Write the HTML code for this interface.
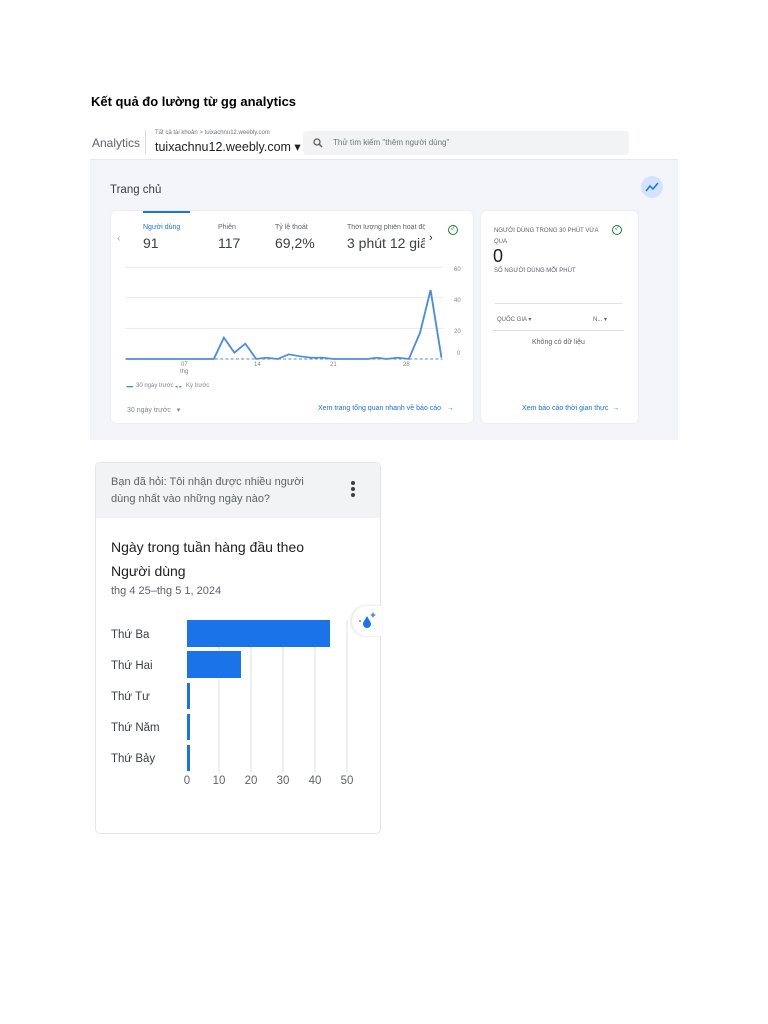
<!DOCTYPE html>
<html><head><meta charset="utf-8"><style>
*{margin:0;padding:0;box-sizing:border-box}
body{width:768px;height:1024px;background:#fff;position:relative;font-family:"Liberation Sans","Noto Sans CJK SC",sans-serif;overflow:hidden}
.a{position:absolute;white-space:nowrap}
.t{position:absolute;white-space:nowrap;font-size:6px;color:#80868b}
</style></head><body>
<div class="a" style="left:91px;top:94px;font-size:13px;font-weight:bold;color:#000">Kết quả đo lường từ gg analytics</div>

<div class="a" style="left:90px;top:124px;width:588px;height:316px;background:#f3f5f8"></div>
<div class="a" style="left:90px;top:124px;width:588px;height:36px;background:#fff;border-bottom:1px solid #e6e8eb"></div>
<div class="a" style="left:92px;top:136px;font-size:12px;color:#5f6368">Analytics</div>
<div class="a" style="left:145px;top:130px;width:1px;height:24px;background:#dadce0"></div>
<div class="a" style="left:155px;top:130px;font-size:6px;color:#70757a">Tất cả tài khoản &gt; tuixachnu12.weebly.com</div>
<div class="a" style="left:155px;top:139px;font-size:12.5px;color:#202124">tuixachnu12.weebly.com ▾</div>
<div class="a" style="left:303px;top:131px;width:326px;height:24px;background:#f1f3f4;border-radius:4px"></div>
<svg class="a" style="left:313px;top:138px" width="10" height="10"><circle cx="4" cy="4" r="3" fill="none" stroke="#5f6368" stroke-width="1.3"/><line x1="6.2" y1="6.2" x2="9" y2="9" stroke="#5f6368" stroke-width="1.5"/></svg>
<div class="a" style="left:333px;top:138px;font-size:8px;color:#70757a">Thử tìm kiếm "thêm người dùng"</div>
<div class="a" style="left:110px;top:184px;font-size:11.5px;color:#3c4043">Trang chủ</div>
<div class="a" style="left:641px;top:176px;width:22px;height:22px;border-radius:11px;background:#d3e3fd"></div>
<svg class="a" style="left:645px;top:181px" width="14" height="12"><polyline points="1,10 5,5 8,8 13,2" fill="none" stroke="#1a73e8" stroke-width="1.5"/></svg>

<div class="a" style="left:111px;top:211px;width:362px;height:212px;background:#fff;border-radius:5px;box-shadow:0 0 1px #ccc"></div>
<div class="a" style="left:143px;top:211px;width:47px;height:2px;background:#1a73e8"></div>
<div class="a" style="left:117px;top:233px;font-size:10px;color:#9aa0a6">‹</div>
<div class="a" style="left:143px;top:224px;font-size:7px;color:#1a73e8">Người dùng</div>
<div class="a" style="left:143px;top:235px;font-size:14px;color:#3c4043">91</div>
<div class="a" style="left:218px;top:224px;font-size:7px;color:#5f6368">Phiên</div>
<div class="a" style="left:218px;top:235px;font-size:14px;color:#3c4043">117</div>
<div class="a" style="left:275px;top:224px;font-size:7px;color:#5f6368">Tỷ lệ thoát</div>
<div class="a" style="left:275px;top:235px;font-size:14px;color:#3c4043">69,2%</div>
<div class="a" style="left:347px;top:224px;font-size:7px;color:#5f6368;width:78px;overflow:hidden">Thời lượng phiên hoạt động</div>
<div class="a" style="left:347px;top:235px;font-size:14px;color:#3c4043;width:78px;overflow:hidden">3 phút 12 giây</div>
<div class="a" style="left:429px;top:232px;font-size:11px;color:#202124">›</div>
<div class="a" style="left:448px;top:225px;width:10px;height:10px;border:1.5px solid #188038;border-radius:50%;font-size:6px;color:#188038;text-align:center;line-height:7px">✓</div>

<svg class="a" style="left:90px;top:260px" width="590" height="180" viewBox="0 0 1573 540" preserveAspectRatio="none">
<g stroke="#e8eaed" stroke-width="3"><line x1="95" y1="22" x2="940" y2="22"/><line x1="95" y1="112" x2="940" y2="112"/><line x1="95" y1="205" x2="940" y2="205"/></g>
<line x1="95" y1="297" x2="940" y2="297" stroke="#4a8de0" stroke-width="3" stroke-dasharray="8 6"/>
<polyline fill="none" stroke="#4a8de0" stroke-width="5" points="95,297 330,297 357,233 385,278 414,251 443,297 470,293 500,297 530,283 560,289 590,293 620,293 650,297 740,297 765,293 790,297 820,293 850,297 880,218 908,90 937,293"/>
<line x1="97" y1="380" x2="115" y2="380" stroke="#4a8de0" stroke-width="4"/>
<line x1="228" y1="380" x2="246" y2="380" stroke="#4a8de0" stroke-width="4" stroke-dasharray="6 4"/>
</svg>
<div class="t" style="left:454px;top:267px">60</div>
<div class="t" style="left:454px;top:298px">40</div>
<div class="t" style="left:454px;top:329px">20</div>
<div class="t" style="left:457px;top:351px">0</div>
<div class="t" style="left:181px;top:362px">07</div>
<div class="t" style="left:180px;top:369px">thg</div>
<div class="t" style="left:254px;top:362px">14</div>
<div class="t" style="left:330px;top:362px">21</div>
<div class="t" style="left:403px;top:362px">28</div>
<div class="t" style="left:136px;top:383px">30 ngày trước</div>
<div class="t" style="left:186px;top:383px">Kỳ trước</div>
<div class="t" style="left:127px;top:406px;font-size:7px">30 ngày trước &nbsp; ▾</div>
<div class="a" style="left:318px;top:405px;font-size:7px;color:#1a73e8">Xem trang tổng quan nhanh về báo cáo &nbsp; →</div>

<div class="a" style="left:481px;top:211px;width:157px;height:212px;background:#fff;border-radius:5px;box-shadow:0 0 1px #ccc"></div>
<div class="a" style="left:494px;top:226px;font-size:6px;color:#5f6368;line-height:11px">NGƯỜI DÙNG TRONG 30 PHÚT VỪA<br>QUA</div>
<div class="a" style="left:612px;top:225px;width:10px;height:10px;border:1.5px solid #188038;border-radius:50%;font-size:6px;color:#188038;text-align:center;line-height:7px">✓</div>
<div class="a" style="left:493px;top:246px;font-size:18px;color:#202124">0</div>
<div class="a" style="left:494px;top:268px;font-size:6px;color:#5f6368">SỐ NGƯỜI DÙNG MỖI PHÚT</div>
<div class="a" style="left:495px;top:303px;width:127px;height:1px;background:#e0e0e0"></div>
<div class="a" style="left:497px;top:316px;font-size:6px;color:#5f6368">QUỐC GIA ▾</div>
<div class="a" style="left:593px;top:316px;font-size:6px;color:#5f6368">N... ▾</div>
<div class="a" style="left:493px;top:330px;width:131px;height:1px;background:#e0e0e0"></div>
<div class="a" style="left:532px;top:339px;font-size:7px;color:#5f6368">Không có dữ liệu</div>
<div class="a" style="left:522px;top:405px;font-size:7px;color:#1a73e8">Xem báo cáo thời gian thực &nbsp;→</div>

<div class="a" style="left:95px;top:462px;width:286px;height:372px;border:1px solid #e3e5e8;border-radius:5px;background:#fff"></div>
<div class="a" style="left:96px;top:463px;width:284px;height:55px;background:#f1f3f4;border-radius:5px 5px 0 0"></div>
<div class="a" style="left:111px;top:474px;font-size:11px;line-height:17px;color:#5f6368">Bạn đã hỏi: Tôi nhận được nhiều người<br>dùng nhất vào những ngày nào?</div>
<div class="a" style="left:351px;top:481px;width:4px;height:4px;border-radius:2px;background:#3c4043;box-shadow:0 6px 0 #3c4043,0 12px 0 #3c4043"></div>
<div class="a" style="left:111px;top:535px;font-size:14px;line-height:24px;color:#202124">Ngày trong tuần hàng đầu theo<br>Người dùng</div>
<div class="a" style="left:111px;top:585px;font-size:11px;color:#5f6368">thg 4 25–thg 5 1, 2024</div>
<div class="a" style="left:352px;top:606px;width:30px;height:30px;border-radius:15px 0 0 15px;background:#fff;box-shadow:-1px 0 3px #ddd"></div>
<svg class="a" style="left:357px;top:609px" width="22" height="22"><path d="M10 7 C8 11 6 13 6 15 A4 4 0 0 0 14 15 C14 13 12 11 10 7Z" fill="#1a73e8"/><path d="M16 3 L17 5 L19 6 L17 7 L16 9 L15 7 L13 6 L15 5Z" fill="#4a8de0"/><circle cx="3" cy="12" r="1" fill="#4a8de0"/></svg>
<svg class="a" style="left:95px;top:610px" width="290" height="180">
<g stroke="#e0e0e0" stroke-width="1"><line x1="124" y1="10" x2="124" y2="163"/><line x1="156" y1="10" x2="156" y2="163"/><line x1="188" y1="10" x2="188" y2="163"/><line x1="220" y1="10" x2="220" y2="163"/><line x1="252" y1="10" x2="252" y2="163"/></g>
<g fill="#1a73e8"><rect x="92" y="10" width="143" height="27"/><rect x="92" y="41" width="54" height="27"/><rect x="92" y="73" width="3" height="26"/><rect x="92" y="104" width="3" height="26"/><rect x="92" y="135" width="3" height="26"/></g>
<g font-size="11.5" fill="#3c4043" font-family="Liberation Sans"><text x="16" y="28">Thứ Ba</text><text x="16" y="59">Thứ Hai</text><text x="16" y="90">Thứ Tư</text><text x="16" y="121">Thứ Năm</text><text x="16" y="152">Thứ Bảy</text></g>
<g font-size="11.5" fill="#5f6368" font-family="Liberation Sans" text-anchor="middle"><text x="92" y="174">0</text><text x="124" y="174">10</text><text x="156" y="174">20</text><text x="188" y="174">30</text><text x="220" y="174">40</text><text x="252" y="174">50</text></g>
</svg>
</body></html>
